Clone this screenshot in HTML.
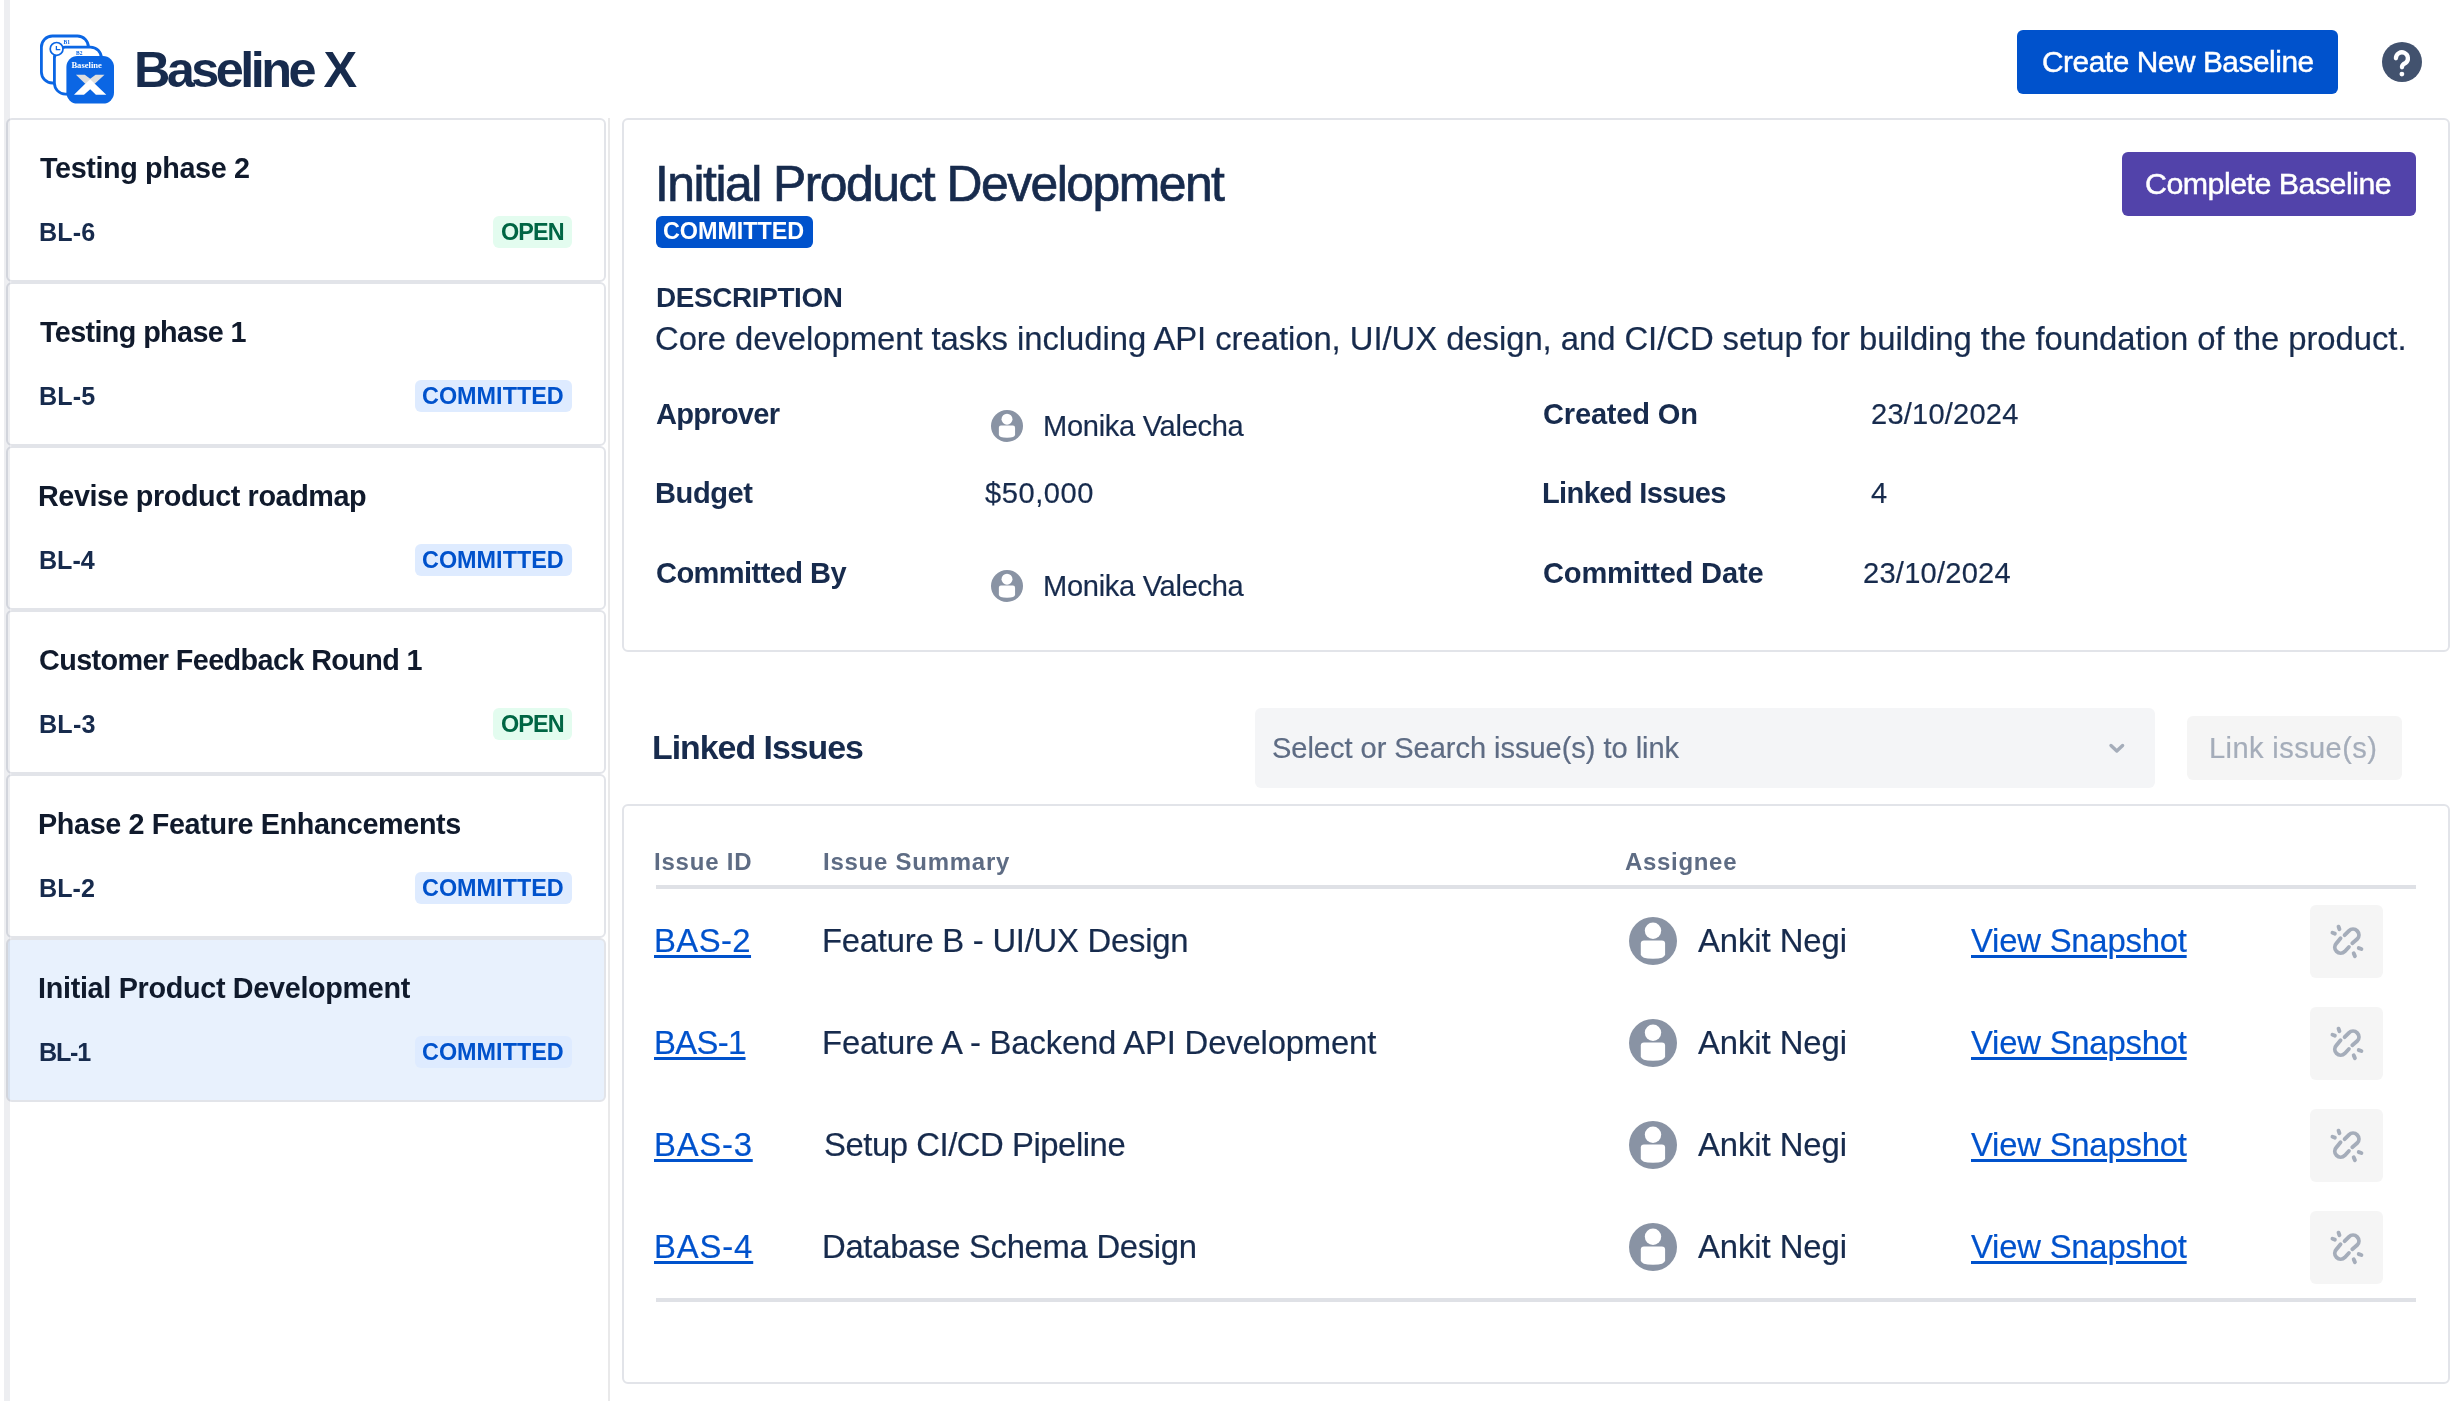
<!DOCTYPE html>
<html><head><meta charset="utf-8">
<style>
html,body{margin:0;padding:0;background:#fff;width:2462px;height:1401px;overflow:hidden;position:relative}
body{font-family:"Liberation Sans",sans-serif;}
.t{position:absolute;white-space:nowrap;will-change:transform}
.abs{position:absolute;box-sizing:border-box;will-change:transform}
.strip{position:absolute;left:4px;top:0;width:6px;height:1401px;background:rgba(9,30,66,0.075);z-index:5}
.sbline{position:absolute;left:607.5px;top:118px;width:2.5px;height:1283px;background:#e9e9ea}
.card{position:absolute;left:6px;width:600px;height:164px;box-sizing:border-box;border:2px solid #e2e4e9;border-radius:6px;background:#fff}
.card.sel{background:#e8f1fd}
.badge{position:absolute;height:32px;border-radius:6px}
.badge.open{background:#e3fcef}
.badge.comm{background:#deebff}
.panel{position:absolute;left:622px;width:1828px;box-sizing:border-box;border:2px solid #e2e4e9;border-radius:6px;background:#fff}
.btn{position:absolute;border-radius:6px}
.av{position:absolute}
.ub{position:absolute;left:2309.5px;width:73px;height:73px;background:#f5f5f5;border-radius:6px}
.line{position:absolute;left:656px;width:1760px;height:4px;background:#dfe1e6}
</style></head><body>
<div class="strip"></div>
<div class="sbline"></div>
<!-- logo -->
<svg class="abs" style="left:36px;top:30px" width="84" height="78" viewBox="36 30 84 78">
  <rect x="41.4" y="36" width="47" height="47" rx="11" fill="#fff" stroke="#0b66e4" stroke-width="2.8"/>
  <rect x="54.4" y="47.1" width="47" height="47" rx="11" fill="#fff" stroke="#0b66e4" stroke-width="2.8"/>
  <circle cx="56.6" cy="48.9" r="6.4" fill="#fff" stroke="#0b66e4" stroke-width="1.7"/>
  <path d="M56.4 46V49.7H60.3" fill="none" stroke="#0b66e4" stroke-width="1.3"/>
  <text x="63.5" y="44" font-family="Liberation Serif" font-weight="700" font-size="5.5" fill="#0b66e4">B1</text>
  <text x="76" y="55.2" font-family="Liberation Serif" font-weight="700" font-size="5.5" fill="#0b66e4">B2</text>
  <rect x="66.4" y="56" width="47.6" height="47.6" rx="11" fill="#0b66e4"/>
  <text x="71.4" y="67.9" font-family="Liberation Serif" font-weight="700" font-size="8.4" fill="#fff" textLength="30.5" lengthAdjust="spacingAndGlyphs">Baseline</text>
  <path d="M75.9 74.8H84.8L90.2 78.7L95.6 74.8H104.5L94.8 83.7H85.2Z" fill="#dedede"/>
  <path d="M90.2 79.2L94.8 83.7L106.3 94.65H95.9L90.2 89.3L84 94.65H74L85.2 83.7Z" fill="#fff"/>
</svg>
<!-- create button -->
<div class="btn" style="left:2016.5px;top:30px;width:321px;height:64px;background:#0052cc"></div>
<svg class="abs" style="left:2381.7px;top:41.9px" width="40" height="40" viewBox="0 0 40 40"><circle cx="20" cy="20" r="20" fill="#42526e"/><path d="M13.9 16.3A6 6 0 1 1 23.6 21Q20.1 22.5 20 24.8V25.3" fill="none" stroke="#fff" stroke-width="4.3" stroke-linecap="round"/><circle cx="19.9" cy="32.1" r="2.4" fill="#fff"/></svg>
<!-- main panel -->
<div class="panel" style="top:118px;height:534px"></div>
<div class="btn" style="left:2122px;top:152px;width:294px;height:64px;background:#5243aa"></div>
<div class="badge" style="left:656px;top:216px;width:157px;height:32px;background:#0052cc"></div>
<!-- linked issues controls -->
<div class="btn" style="left:1255px;top:708px;width:899.5px;height:80px;background:#f4f5f7"></div>
<svg class="abs" style="left:2106px;top:740px" width="20" height="16" viewBox="0 0 20 16"><path d="M5 5.5L10.8 11L16.6 5.5" fill="none" stroke="#a5adba" stroke-width="3.4" stroke-linecap="round" stroke-linejoin="round"/></svg>
<div class="btn" style="left:2186.5px;top:716px;width:215px;height:63.5px;background:#f5f5f5"></div>
<div class="panel" style="top:804px;height:580px"></div>
<div class="line" style="top:885px"></div>
<div class="line" style="top:1298px"></div>
<div class="card" style="top:118px"></div>
<div class="badge open" style="left:493px;top:216px;width:79px"></div>
<div class="card" style="top:282px"></div>
<div class="badge comm" style="left:415px;top:380px;width:157px"></div>
<div class="card" style="top:446px"></div>
<div class="badge comm" style="left:415px;top:544px;width:157px"></div>
<div class="card" style="top:610px"></div>
<div class="badge open" style="left:493px;top:708px;width:79px"></div>
<div class="card" style="top:774px"></div>
<div class="badge comm" style="left:415px;top:872px;width:157px"></div>
<div class="card sel" style="top:938px"></div>
<div class="badge comm" style="left:415px;top:1036px;width:157px"></div>
<svg class="av" style="left:1628.6px;top:917.0px;width:48px;height:48px" viewBox="0 0 48 48"><circle cx="24" cy="24" r="24" fill="#8993a4"/><circle cx="24" cy="13.8" r="8.2" fill="#fff"/><path d="M11.8 26.6Q11.8 23.4 15 23.4H32.9Q36.1 23.4 36.1 26.6V37.2Q36.1 41.8 24 41.8Q11.8 41.8 11.8 37.2Z" fill="#fff"/></svg>
<div class="ub" style="top:905px"><svg viewBox="0 0 1483 1401" width="90" height="85" style="position:absolute;left:-9.4px;top:-4.9px" fill="none" stroke="#a5adba" stroke-width="64" stroke-linecap="round">
<path d="M735 580L806 508A96 96 0 0 1 942 644L862 712"/>
<path d="M668 632L602 712A96 96 0 0 0 738 848L806 775"/>
<path d="M535 540L575 555"/><path d="M635 440L650 482"/><path d="M968 792L1012 808"/><path d="M885 880L905 925"/>
</svg></div>
<svg class="av" style="left:1628.6px;top:1019.0px;width:48px;height:48px" viewBox="0 0 48 48"><circle cx="24" cy="24" r="24" fill="#8993a4"/><circle cx="24" cy="13.8" r="8.2" fill="#fff"/><path d="M11.8 26.6Q11.8 23.4 15 23.4H32.9Q36.1 23.4 36.1 26.6V37.2Q36.1 41.8 24 41.8Q11.8 41.8 11.8 37.2Z" fill="#fff"/></svg>
<div class="ub" style="top:1007px"><svg viewBox="0 0 1483 1401" width="90" height="85" style="position:absolute;left:-9.4px;top:-4.9px" fill="none" stroke="#a5adba" stroke-width="64" stroke-linecap="round">
<path d="M735 580L806 508A96 96 0 0 1 942 644L862 712"/>
<path d="M668 632L602 712A96 96 0 0 0 738 848L806 775"/>
<path d="M535 540L575 555"/><path d="M635 440L650 482"/><path d="M968 792L1012 808"/><path d="M885 880L905 925"/>
</svg></div>
<svg class="av" style="left:1628.6px;top:1121.0px;width:48px;height:48px" viewBox="0 0 48 48"><circle cx="24" cy="24" r="24" fill="#8993a4"/><circle cx="24" cy="13.8" r="8.2" fill="#fff"/><path d="M11.8 26.6Q11.8 23.4 15 23.4H32.9Q36.1 23.4 36.1 26.6V37.2Q36.1 41.8 24 41.8Q11.8 41.8 11.8 37.2Z" fill="#fff"/></svg>
<div class="ub" style="top:1109px"><svg viewBox="0 0 1483 1401" width="90" height="85" style="position:absolute;left:-9.4px;top:-4.9px" fill="none" stroke="#a5adba" stroke-width="64" stroke-linecap="round">
<path d="M735 580L806 508A96 96 0 0 1 942 644L862 712"/>
<path d="M668 632L602 712A96 96 0 0 0 738 848L806 775"/>
<path d="M535 540L575 555"/><path d="M635 440L650 482"/><path d="M968 792L1012 808"/><path d="M885 880L905 925"/>
</svg></div>
<svg class="av" style="left:1628.6px;top:1223.0px;width:48px;height:48px" viewBox="0 0 48 48"><circle cx="24" cy="24" r="24" fill="#8993a4"/><circle cx="24" cy="13.8" r="8.2" fill="#fff"/><path d="M11.8 26.6Q11.8 23.4 15 23.4H32.9Q36.1 23.4 36.1 26.6V37.2Q36.1 41.8 24 41.8Q11.8 41.8 11.8 37.2Z" fill="#fff"/></svg>
<div class="ub" style="top:1211px"><svg viewBox="0 0 1483 1401" width="90" height="85" style="position:absolute;left:-9.4px;top:-4.9px" fill="none" stroke="#a5adba" stroke-width="64" stroke-linecap="round">
<path d="M735 580L806 508A96 96 0 0 1 942 644L862 712"/>
<path d="M668 632L602 712A96 96 0 0 0 738 848L806 775"/>
<path d="M535 540L575 555"/><path d="M635 440L650 482"/><path d="M968 792L1012 808"/><path d="M885 880L905 925"/>
</svg></div>
<svg class="av" style="left:991.4px;top:410.0px;width:32px;height:32px" viewBox="0 0 48 48"><circle cx="24" cy="24" r="24" fill="#8993a4"/><circle cx="24" cy="13.8" r="8.2" fill="#fff"/><path d="M11.8 26.6Q11.8 23.4 15 23.4H32.9Q36.1 23.4 36.1 26.6V37.2Q36.1 41.8 24 41.8Q11.8 41.8 11.8 37.2Z" fill="#fff"/></svg>
<svg class="av" style="left:991.4px;top:570.0px;width:32px;height:32px" viewBox="0 0 48 48"><circle cx="24" cy="24" r="24" fill="#8993a4"/><circle cx="24" cy="13.8" r="8.2" fill="#fff"/><path d="M11.8 26.6Q11.8 23.4 15 23.4H32.9Q36.1 23.4 36.1 26.6V37.2Q36.1 41.8 24 41.8Q11.8 41.8 11.8 37.2Z" fill="#fff"/></svg>
<div class="t" style="left:133.61px;top:45.21px;font-size:50.44px;line-height:50.44px;font-weight:700;letter-spacing:-3.565px;color:#172b4d;">Baseline X</div>
<div class="t" style="left:2041.62px;top:47.18px;font-size:29.80px;line-height:29.80px;font-weight:400;letter-spacing:-0.429px;color:#fff;-webkit-text-stroke:0.45px #fff;">Create New Baseline</div>
<div class="t" style="left:2145.34px;top:168.49px;font-size:30.38px;line-height:30.38px;font-weight:400;letter-spacing:-0.513px;color:#fff;-webkit-text-stroke:0.45px #fff;">Complete Baseline</div>
<div class="t" style="left:40.24px;top:153.54px;font-size:28.78px;line-height:28.78px;font-weight:700;letter-spacing:-0.385px;color:#101a2c;">Testing phase 2</div>
<div class="t" style="left:38.88px;top:219.51px;font-size:25.15px;line-height:25.15px;font-weight:700;letter-spacing:0.160px;color:#172b4d;">BL-6</div>
<div class="t" style="left:501.10px;top:220.69px;font-size:23.40px;line-height:23.40px;font-weight:700;letter-spacing:-0.886px;color:#006644;">OPEN</div>
<div class="t" style="left:40.24px;top:317.54px;font-size:28.78px;line-height:28.78px;font-weight:700;letter-spacing:-0.626px;color:#101a2c;">Testing phase 1</div>
<div class="t" style="left:38.88px;top:383.51px;font-size:25.15px;line-height:25.15px;font-weight:700;letter-spacing:0.093px;color:#172b4d;">BL-5</div>
<div class="t" style="left:422.34px;top:384.69px;font-size:23.40px;line-height:23.40px;font-weight:700;letter-spacing:0.017px;color:#0052cc;">COMMITTED</div>
<div class="t" style="left:38.44px;top:481.54px;font-size:28.78px;line-height:28.78px;font-weight:700;letter-spacing:-0.413px;color:#101a2c;">Revise product roadmap</div>
<div class="t" style="left:38.88px;top:547.51px;font-size:25.15px;line-height:25.15px;font-weight:700;letter-spacing:-0.067px;color:#172b4d;">BL-4</div>
<div class="t" style="left:422.34px;top:548.69px;font-size:23.40px;line-height:23.40px;font-weight:700;letter-spacing:0.017px;color:#0052cc;">COMMITTED</div>
<div class="t" style="left:39.34px;top:645.54px;font-size:28.78px;line-height:28.78px;font-weight:700;letter-spacing:-0.601px;color:#101a2c;">Customer Feedback Round 1</div>
<div class="t" style="left:38.88px;top:711.51px;font-size:25.15px;line-height:25.15px;font-weight:700;letter-spacing:0.200px;color:#172b4d;">BL-3</div>
<div class="t" style="left:501.10px;top:712.69px;font-size:23.40px;line-height:23.40px;font-weight:700;letter-spacing:-0.886px;color:#006644;">OPEN</div>
<div class="t" style="left:38.44px;top:809.54px;font-size:28.78px;line-height:28.78px;font-weight:700;letter-spacing:-0.369px;color:#101a2c;">Phase 2 Feature Enhancements</div>
<div class="t" style="left:38.88px;top:875.51px;font-size:25.15px;line-height:25.15px;font-weight:700;letter-spacing:0.027px;color:#172b4d;">BL-2</div>
<div class="t" style="left:422.34px;top:876.69px;font-size:23.40px;line-height:23.40px;font-weight:700;letter-spacing:0.017px;color:#0052cc;">COMMITTED</div>
<div class="t" style="left:38.44px;top:973.54px;font-size:28.78px;line-height:28.78px;font-weight:700;letter-spacing:-0.308px;color:#101a2c;">Initial Product Development</div>
<div class="t" style="left:38.88px;top:1039.51px;font-size:25.15px;line-height:25.15px;font-weight:700;letter-spacing:-1.200px;color:#172b4d;">BL-1</div>
<div class="t" style="left:422.34px;top:1040.69px;font-size:23.40px;line-height:23.40px;font-weight:700;letter-spacing:0.017px;color:#0052cc;">COMMITTED</div>
<div class="t" style="left:654.55px;top:159.50px;font-size:49.85px;line-height:49.85px;font-weight:400;letter-spacing:-1.521px;color:#172b4d;-webkit-text-stroke:0.7px #172b4d;">Initial Product Development</div>
<div class="t" style="left:663.34px;top:220.19px;font-size:23.40px;line-height:23.40px;font-weight:700;letter-spacing:-0.063px;color:#fff;">COMMITTED</div>
<div class="t" style="left:655.64px;top:284.38px;font-size:27.91px;line-height:27.91px;font-weight:700;letter-spacing:-0.377px;color:#172b4d;">DESCRIPTION</div>
<div class="t" style="left:655.46px;top:322.79px;font-size:32.85px;line-height:32.85px;font-weight:400;letter-spacing:-0.049px;color:#172b4d;-webkit-text-stroke:0.2px #172b4d;">Core development tasks including API creation, UI/UX design, and CI/CD setup for building the foundation of the product.</div>
<div class="t" style="left:655.65px;top:400.09px;font-size:29.07px;line-height:29.07px;font-weight:700;letter-spacing:-0.746px;color:#172b4d;">Approver</div>
<div class="t" style="left:655.18px;top:479.39px;font-size:29.07px;line-height:29.07px;font-weight:700;letter-spacing:-0.427px;color:#172b4d;">Budget</div>
<div class="t" style="left:656.09px;top:558.89px;font-size:29.07px;line-height:29.07px;font-weight:700;letter-spacing:-0.586px;color:#172b4d;">Committed By</div>
<div class="t" style="left:1042.61px;top:412.09px;font-size:29.07px;line-height:29.07px;font-weight:400;letter-spacing:-0.297px;color:#172b4d;-webkit-text-stroke:0.2px #172b4d;">Monika Valecha</div>
<div class="t" style="left:984.76px;top:479.39px;font-size:29.07px;line-height:29.07px;font-weight:400;letter-spacing:0.567px;color:#172b4d;-webkit-text-stroke:0.2px #172b4d;">$50,000</div>
<div class="t" style="left:1042.61px;top:571.89px;font-size:29.07px;line-height:29.07px;font-weight:400;letter-spacing:-0.297px;color:#172b4d;-webkit-text-stroke:0.2px #172b4d;">Monika Valecha</div>
<div class="t" style="left:1543.09px;top:400.09px;font-size:29.07px;line-height:29.07px;font-weight:700;letter-spacing:-0.193px;color:#172b4d;">Created On</div>
<div class="t" style="left:1542.18px;top:479.39px;font-size:29.07px;line-height:29.07px;font-weight:700;letter-spacing:-0.647px;color:#172b4d;">Linked Issues</div>
<div class="t" style="left:1543.09px;top:558.89px;font-size:29.07px;line-height:29.07px;font-weight:700;letter-spacing:-0.174px;color:#172b4d;">Committed Date</div>
<div class="t" style="left:1870.64px;top:400.09px;font-size:29.07px;line-height:29.07px;font-weight:400;letter-spacing:0.217px;color:#172b4d;-webkit-text-stroke:0.2px #172b4d;">23/10/2024</div>
<div class="t" style="left:1870.65px;top:479.39px;font-size:29.07px;line-height:29.07px;font-weight:400;letter-spacing:0.000px;color:#172b4d;-webkit-text-stroke:0.2px #172b4d;">4</div>
<div class="t" style="left:1863.40px;top:558.89px;font-size:29.07px;line-height:29.07px;font-weight:400;letter-spacing:0.246px;color:#172b4d;-webkit-text-stroke:0.2px #172b4d;">23/10/2024</div>
<div class="t" style="left:652.38px;top:731.33px;font-size:33.87px;line-height:33.87px;font-weight:700;letter-spacing:-1.002px;color:#172b4d;">Linked Issues</div>
<div class="t" style="left:1271.71px;top:733.89px;font-size:29.07px;line-height:29.07px;font-weight:400;letter-spacing:-0.048px;color:#5e6c84;-webkit-text-stroke:0.2px #5e6c84;">Select or Search issue(s) to link</div>
<div class="t" style="left:2209.11px;top:733.89px;font-size:29.07px;line-height:29.07px;font-weight:400;letter-spacing:0.394px;color:#a5adba;-webkit-text-stroke:0.2px #a5adba;">Link issue(s)</div>
<div class="t" style="left:654.40px;top:850.30px;font-size:23.98px;line-height:23.98px;font-weight:700;letter-spacing:0.814px;color:#5e6c84;">Issue ID</div>
<div class="t" style="left:823.40px;top:850.30px;font-size:23.98px;line-height:23.98px;font-weight:700;letter-spacing:0.760px;color:#5e6c84;">Issue Summary</div>
<div class="t" style="left:1624.74px;top:850.30px;font-size:23.98px;line-height:23.98px;font-weight:700;letter-spacing:0.699px;color:#5e6c84;">Assignee</div>
<div class="t" style="left:653.67px;top:924.79px;font-size:32.85px;line-height:32.85px;font-weight:400;letter-spacing:0.429px;color:#0052cc;text-decoration:underline;text-decoration-thickness:3px;text-underline-offset:3px;-webkit-text-stroke:0.2px #0052cc;">BAS-2</div>
<div class="t" style="left:822.41px;top:924.79px;font-size:32.85px;line-height:32.85px;font-weight:400;letter-spacing:-0.244px;color:#172b4d;-webkit-text-stroke:0.2px #172b4d;">Feature B - UI/UX Design</div>
<div class="t" style="left:1698.38px;top:924.79px;font-size:32.85px;line-height:32.85px;font-weight:400;letter-spacing:-0.075px;color:#172b4d;-webkit-text-stroke:0.2px #172b4d;">Ankit Negi</div>
<div class="t" style="left:1971.38px;top:924.79px;font-size:32.85px;line-height:32.85px;font-weight:400;letter-spacing:-0.210px;color:#0052cc;text-decoration:underline;text-decoration-thickness:3px;text-underline-offset:3px;-webkit-text-stroke:0.2px #0052cc;">View Snapshot</div>
<div class="t" style="left:653.67px;top:1026.79px;font-size:32.85px;line-height:32.85px;font-weight:400;letter-spacing:-0.666px;color:#0052cc;text-decoration:underline;text-decoration-thickness:3px;text-underline-offset:3px;-webkit-text-stroke:0.2px #0052cc;">BAS-1</div>
<div class="t" style="left:822.41px;top:1026.79px;font-size:32.85px;line-height:32.85px;font-weight:400;letter-spacing:-0.174px;color:#172b4d;-webkit-text-stroke:0.2px #172b4d;">Feature A - Backend API Development</div>
<div class="t" style="left:1698.38px;top:1026.79px;font-size:32.85px;line-height:32.85px;font-weight:400;letter-spacing:-0.075px;color:#172b4d;-webkit-text-stroke:0.2px #172b4d;">Ankit Negi</div>
<div class="t" style="left:1971.38px;top:1026.79px;font-size:32.85px;line-height:32.85px;font-weight:400;letter-spacing:-0.210px;color:#0052cc;text-decoration:underline;text-decoration-thickness:3px;text-underline-offset:3px;-webkit-text-stroke:0.2px #0052cc;">View Snapshot</div>
<div class="t" style="left:653.67px;top:1128.79px;font-size:32.85px;line-height:32.85px;font-weight:400;letter-spacing:0.774px;color:#0052cc;text-decoration:underline;text-decoration-thickness:3px;text-underline-offset:3px;-webkit-text-stroke:0.2px #0052cc;">BAS-3</div>
<div class="t" style="left:823.95px;top:1128.79px;font-size:32.85px;line-height:32.85px;font-weight:400;letter-spacing:-0.448px;color:#172b4d;-webkit-text-stroke:0.2px #172b4d;">Setup CI/CD Pipeline</div>
<div class="t" style="left:1698.38px;top:1128.79px;font-size:32.85px;line-height:32.85px;font-weight:400;letter-spacing:-0.075px;color:#172b4d;-webkit-text-stroke:0.2px #172b4d;">Ankit Negi</div>
<div class="t" style="left:1971.38px;top:1128.79px;font-size:32.85px;line-height:32.85px;font-weight:400;letter-spacing:-0.210px;color:#0052cc;text-decoration:underline;text-decoration-thickness:3px;text-underline-offset:3px;-webkit-text-stroke:0.2px #0052cc;">View Snapshot</div>
<div class="t" style="left:653.67px;top:1230.79px;font-size:32.85px;line-height:32.85px;font-weight:400;letter-spacing:0.866px;color:#0052cc;text-decoration:underline;text-decoration-thickness:3px;text-underline-offset:3px;-webkit-text-stroke:0.2px #0052cc;">BAS-4</div>
<div class="t" style="left:822.41px;top:1230.79px;font-size:32.85px;line-height:32.85px;font-weight:400;letter-spacing:-0.301px;color:#172b4d;-webkit-text-stroke:0.2px #172b4d;">Database Schema Design</div>
<div class="t" style="left:1698.38px;top:1230.79px;font-size:32.85px;line-height:32.85px;font-weight:400;letter-spacing:-0.075px;color:#172b4d;-webkit-text-stroke:0.2px #172b4d;">Ankit Negi</div>
<div class="t" style="left:1971.38px;top:1230.79px;font-size:32.85px;line-height:32.85px;font-weight:400;letter-spacing:-0.210px;color:#0052cc;text-decoration:underline;text-decoration-thickness:3px;text-underline-offset:3px;-webkit-text-stroke:0.2px #0052cc;">View Snapshot</div>
</body></html>
